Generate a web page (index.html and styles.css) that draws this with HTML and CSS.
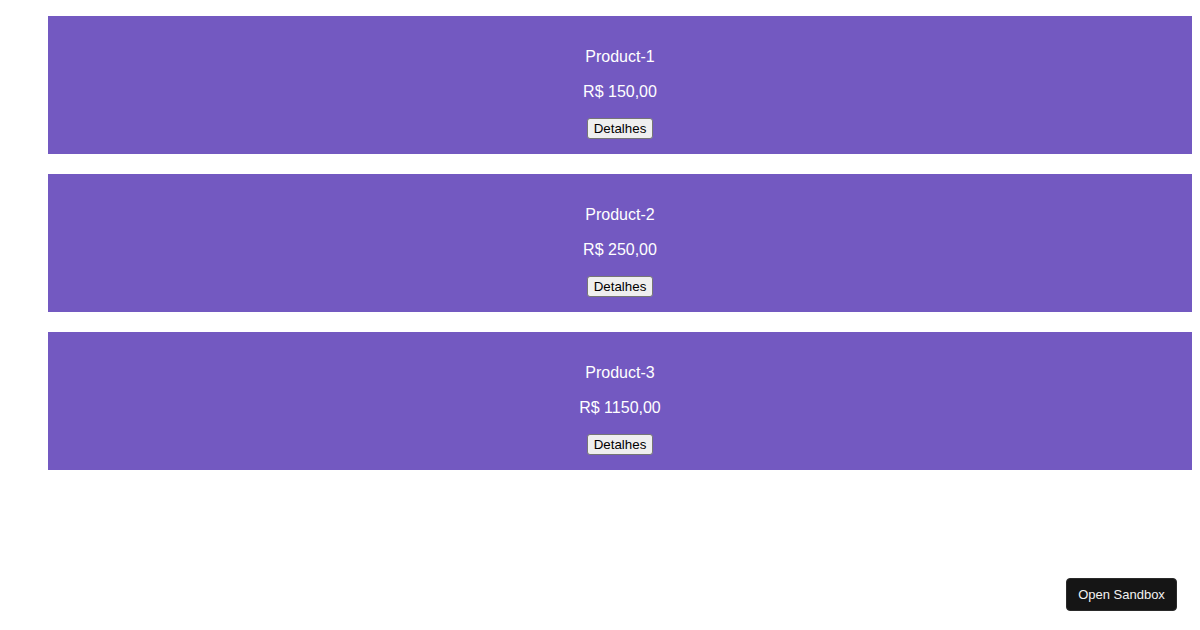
FILE: index.html
```html
<!DOCTYPE html>
<html>
<head>
<meta charset="utf-8">
<link rel="stylesheet" href="styles.css">
</head>
<body>
<ul class="list">
  <li class="card">
    <p class="name">Product-1</p>
    <p class="price">R$ 150,00</p>
    <button class="details">Detalhes</button>
  </li>
  <li class="card">
    <p class="name">Product-2</p>
    <p class="price">R$ 250,00</p>
    <button class="details">Detalhes</button>
  </li>
  <li class="card">
    <p class="name">Product-3</p>
    <p class="price">R$ 1150,00</p>
    <button class="details">Detalhes</button>
  </li>
</ul>
<a class="sandbox">Open Sandbox</a>
</body>
</html>
```
FILE: styles.css
```css
html, body {
  margin: 0;
  padding: 0;
  background: #fff;
}
body {
  padding: 16px 8px 8px 48px;
  font-family: "Liberation Sans", Arial, sans-serif;
}
.list {
  list-style: none;
  margin: 0;
  padding: 0;
  display: flex;
  flex-direction: column;
  gap: 20px;
}
.card {
  background: #7359c1;
  color: #fff;
  height: 138px;
  box-sizing: border-box;
  padding-top: 32px;
  display: flex;
  flex-direction: column;
  align-items: center;
}
.name, .price {
  margin: 0 0 17px 0;
  font-size: 16px;
  line-height: 18px;
}
.details {
  font-family: "Liberation Sans", Arial, sans-serif;
  font-size: 13.333px;
  color: #000;
  background: #efefef;
  border: 1px solid #767676;
  border-radius: 3px;
  padding: 1px 6px;
  height: 21px;
  min-width: 66px;
  margin-top: 0;
}
.sandbox {
  position: fixed;
  right: 23px;
  bottom: 19px;
  width: 111px;
  height: 33px;
  box-sizing: border-box;
  background: #151515;
  color: #f2f2f2;
  border-radius: 4px;
  font-size: 13px;
  display: flex;
  align-items: center;
  justify-content: center;
  border: 1px solid #2a2a2a;
}
```
